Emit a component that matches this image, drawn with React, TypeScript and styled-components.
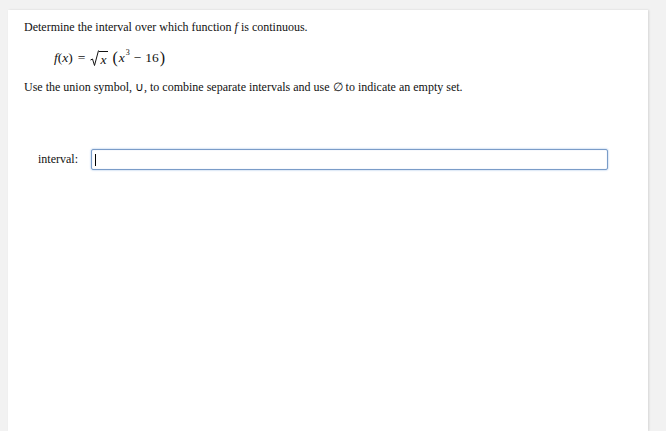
import React from "react";
import styled, { createGlobalStyle } from "styled-components";

const Global = createGlobalStyle`
  html, body {
    margin: 0;
    padding: 0;
    background: #f2f2f2;
    height: 100%;
    overflow: hidden;
  }
`;

const Page = styled.div`
  padding: 10px 18px 0 8px;
  height: 431px;
  box-sizing: border-box;
`;

const Card = styled.div`
  background: #fff;
  height: 100%;
  box-shadow: 1px 0 2px rgba(0, 0, 0, 0.12);
  padding: 9px 16px;
  box-sizing: border-box;
  font-family: "Liberation Serif", "Times New Roman", serif;
  font-size: 12px;
  color: #111;
`;

const Para = styled.p`
  margin: 0;
  line-height: 16px;
`;

const MathLine = styled.div`
  margin: 14px 0 12px 30px;
  font-size: 13.5px;
  line-height: 18px;
  display: flex;
  align-items: center;
`;

const Ital = styled.i`
  font-style: italic;
`;

const Op = styled.span<{ $gap?: number }>`
  margin: 0 ${(p) => p.$gap ?? 5}px;
`;

const Sqrt = styled.span`
  display: inline-flex;
  align-items: flex-end;
  margin: 0 3px 0 0;
`;

const Radicand = styled.span`
  border-top: 1px solid #111;
  padding: 0 2px 0 1px;
  line-height: 15px;
  font-style: italic;
`;

const Sup = styled.span`
  font-size: 8px;
  position: relative;
  top: -5px;
  margin-left: 1px;
`;

const Paren = styled.span`
  font-size: 16px;
  line-height: 18px;
  margin: 0 1px;
`;

const AnswerRow = styled.div`
  display: flex;
  align-items: center;
  margin-top: 54px;
  padding-left: 14px;
  gap: 13px;
`;

const Field = styled.div`
  width: 517px;
  height: 21px;
  box-sizing: border-box;
  border: 1px solid #7a9cc8;
  box-shadow: 0 0 2px #8fb3e0, inset 0 0 1px #a8c2e4;
  border-radius: 2px;
  padding-left: 3px;
  display: flex;
  align-items: center;
`;

const Caret = styled.span`
  width: 1px;
  height: 12px;
  background: #000;
`;

export default function App() {
  return (
    <>
      <Global />
      <Page>
        <Card>
          <Para>
            Determine the interval over which function <Ital>f</Ital> is continuous.
          </Para>
          <MathLine>
            <Ital>f</Ital>(<Ital>x</Ital>)<Op>=</Op>
            <Sqrt>
              <svg width="9" height="17" viewBox="0 0 9 17">
                <path d="M0.5 10 L2.5 9 L4.5 15.5 L8.5 0.5" fill="none" stroke="#111" strokeWidth="1" />
              </svg>
              <Radicand>x</Radicand>
            </Sqrt>
            <Paren>(</Paren>
            <Ital>x</Ital>
            <Sup>3</Sup>
            <Op $gap={4}>−</Op>16
            <Paren>)</Paren>
          </MathLine>
          <Para>
            Use the union symbol, ∪, to combine separate intervals and use ∅ to indicate an empty set.
          </Para>
          <AnswerRow>
            <span>interval:</span>
            <Field>
              <Caret />
            </Field>
          </AnswerRow>
        </Card>
      </Page>
    </>
  );
}
